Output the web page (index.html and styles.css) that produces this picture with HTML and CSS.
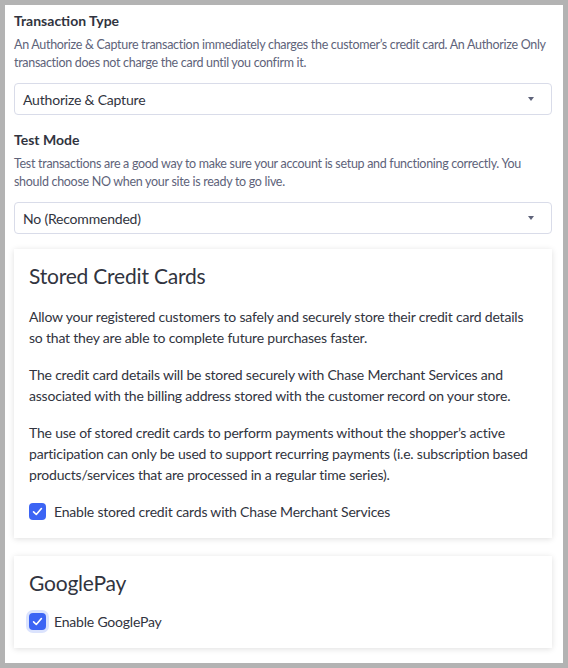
FILE: index.html
```html
<!DOCTYPE html>
<html lang="en">
<head>
<meta charset="utf-8">
<title>Payment settings</title>
<link rel="stylesheet" href="styles.css">
</head>
<body>
<div class="frame">
  <div class="field">
    <div class="field-title">Transaction Type</div>
    <p class="field-desc">An Authorize &amp; Capture transaction immediately charges the customer’s credit card. An Authorize Only transaction does not charge the card until you confirm it.</p>
    <div class="select">
      <span class="select-value">Authorize &amp; Capture</span>
      <span class="select-arrow"></span>
    </div>
  </div>
  <div class="field">
    <div class="field-title">Test Mode</div>
    <p class="field-desc">Test transactions are a good way to make sure your account is setup and functioning correctly. You should choose NO when your site is ready to go live.</p>
    <div class="select">
      <span class="select-value">No (Recommended)</span>
      <span class="select-arrow"></span>
    </div>
  </div>

  <section class="card">
    <h2 class="card-title">Stored Credit Cards</h2>
    <p class="card-text">Allow your registered customers to safely and securely store their credit card details so that they are able to complete future purchases faster.</p>
    <p class="card-text">The credit card details will be stored securely with Chase Merchant Services and associated with the billing address stored with the customer record on your store.</p>
    <p class="card-text">The use of stored credit cards to perform payments without the shopper’s active participation can only be used to support recurring payments (i.e. subscription based products/services that are processed in a regular time series).</p>
    <label class="check-row">
      <span class="checkbox"><svg viewBox="0 0 17 17" width="17" height="17"><path d="M4.6 8.9 L7.3 11.5 L12.4 5.6" fill="none" stroke="#fff" stroke-width="1.6" stroke-linecap="round" stroke-linejoin="round"/></svg></span>
      <span class="check-label">Enable stored credit cards with Chase Merchant Services</span>
    </label>
  </section>

  <section class="card card-small">
    <h2 class="card-title">GooglePay</h2>
    <label class="check-row check-row-tight">
      <span class="checkbox checkbox-focus"><svg viewBox="0 0 17 17" width="17" height="17"><path d="M4.6 8.9 L7.3 11.5 L12.4 5.6" fill="none" stroke="#fff" stroke-width="1.6" stroke-linecap="round" stroke-linejoin="round"/></svg></span>
      <span class="check-label">Enable GooglePay</span>
    </label>
  </section>
</div>
</body>
</html>
```

FILE: styles.css
```css
html, body {
  margin: 0;
  padding: 0;
}
body {
  background: #b3b3b3;
  font-family: "Source Sans Pro", Lato, "Noto Sans", sans-serif;
  color: #313440;
  padding: 5px;
  width: 568px;
  height: 668px;
  box-sizing: border-box;
}
.frame {
  background: #fff;
  width: 558px;
  height: 658px;
  box-sizing: border-box;
  padding: 6px 11px 0 9px;
}
.field {
  margin-bottom: 15px;
}
.field-title {
  font-size: 14px;
  font-weight: 700;
  line-height: 20px;
  color: #313440;
}
.field-desc {
  margin: 5px 0 0;
  font-size: 12.5px;
  line-height: 18px;
  color: #5e637a;
  letter-spacing: -0.3px;
}
.select {
  margin-top: 11px;
  height: 32px;
  box-sizing: border-box;
  border: 1px solid #d9dce9;
  border-radius: 4px;
  display: flex;
  align-items: center;
  justify-content: space-between;
  padding: 0 17px 0 8px;
}
.select-value {
  font-size: 14px;
  color: #313440;
  letter-spacing: -0.2px;
}
.select-arrow {
  width: 0;
  height: 0;
  border-left: 3px solid transparent;
  border-right: 3px solid transparent;
  border-top: 4px solid #5e637a;
}
.card {
  background: #fff;
  box-shadow: 0 1px 6px rgba(0, 0, 0, 0.13);
  padding: 16px 15px 16px 15px;
  margin-bottom: 18px;
}
.card-title {
  margin: 0 0 19px;
  font-size: 21px;
  line-height: 22px;
  font-weight: 400;
  color: #313440;
  letter-spacing: -0.2px;
}
.card-small .card-title {
  margin-bottom: 17px;
}
.card-text {
  margin: 0 0 16px;
  font-size: 14px;
  line-height: 21px;
  color: #313440;
  letter-spacing: -0.2px;
}
.check-row {
  display: flex;
  align-items: center;
  gap: 8px;
  height: 21px;
}
.checkbox {
  width: 17px;
  height: 17px;
  border-radius: 4px;
  background: #3c64f4;
  display: flex;
  flex: none;
}
.checkbox-focus {
  box-shadow: 0 0 0 3px #dbe3fd;
}
.check-label {
  font-size: 14px;
  color: #313440;
  letter-spacing: -0.2px;
}
```
